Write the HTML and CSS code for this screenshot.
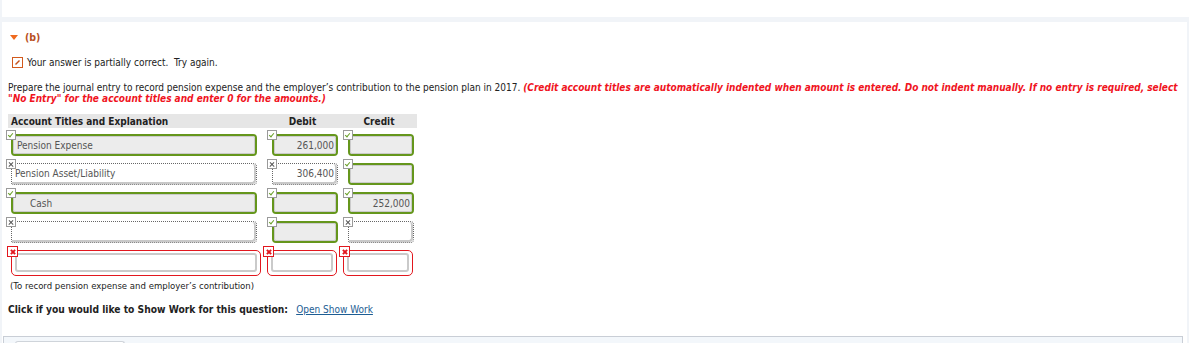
FILE: index.html
```html
<!DOCTYPE html>
<html lang="en">
<head>
    <meta charset="UTF-8">
    <title>Journal entry (b)</title>
    <link rel="stylesheet" href="styles.css">
</head>
<body>
    <div class="topbar"></div>
    <div class="panel">
        <!-- part heading -->
        <div class="part-head">
            <span class="caret"></span>
            <span class="part-label">(b)</span>
        </div>
        <!-- answer status -->
        <div class="status">
            <span class="status-icon">
                <svg width="7" height="7" viewBox="0 0 7 7"><path d="M1.5 5.5 L5.5 1.5" stroke="#c5501a" stroke-width="1.4"/></svg>
            </span>
            <span>Your answer is partially correct.&nbsp; Try again.</span>
        </div>
        <p class="prompt">Prepare the journal entry to record pension expense and the employer’s contribution to the pension plan in 2017. <em class="hint">(Credit account titles are automatically indented when amount is entered. Do not indent manually. If no entry is required, select "No Entry" for the account titles and enter 0 for the amounts.)</em></p>

        <!-- journal table -->
        <div class="journal">
            <div class="jhead">
                <div class="jh-acct">Account Titles and Explanation</div>
                <div class="jh-num">Debit</div>
                <div class="jh-num">Credit</div>
            </div>

            <div class="jrow">
                <div class="cell acct"><div class="fld ok"><i class="mark ok"></i><div class="box">Pension Expense</div></div></div>
                <div class="cell dr"><div class="fld ok"><i class="mark ok"></i><div class="box num">261,000</div></div></div>
                <div class="cell cr"><div class="fld ok"><i class="mark ok"></i><div class="box num"></div></div></div>
            </div>
            <div class="jrow">
                <div class="cell acct"><div class="fld bad"><i class="mark bad"></i><div class="box">Pension Asset/Liability</div></div></div>
                <div class="cell dr"><div class="fld bad"><i class="mark bad"></i><div class="box num">306,400</div></div></div>
                <div class="cell cr"><div class="fld ok"><i class="mark ok"></i><div class="box num"></div></div></div>
            </div>
            <div class="jrow">
                <div class="cell acct"><div class="fld ok"><i class="mark ok"></i><div class="box indent">Cash</div></div></div>
                <div class="cell dr"><div class="fld ok"><i class="mark ok"></i><div class="box num"></div></div></div>
                <div class="cell cr"><div class="fld ok"><i class="mark ok"></i><div class="box num">252,000</div></div></div>
            </div>
            <div class="jrow">
                <div class="cell acct"><div class="fld bad"><i class="mark bad"></i><div class="box"></div></div></div>
                <div class="cell dr"><div class="fld ok"><i class="mark ok"></i><div class="box num"></div></div></div>
                <div class="cell cr"><div class="fld bad"><i class="mark bad"></i><div class="box num"></div></div></div>
            </div>
            <div class="jrow missing">
                <div class="cell acct"><div class="fld req"><i class="mark req"></i><div class="box"></div></div></div>
                <div class="cell dr"><div class="fld req"><i class="mark req"></i><div class="box num"></div></div></div>
                <div class="cell cr"><div class="fld req"><i class="mark req"></i><div class="box num"></div></div></div>
            </div>
        </div>

        <p class="note">(To record pension expense and employer’s contribution)</p>
        <p class="showwork">Click if you would like to Show Work for this question: <a href="#" class="sw-link">Open Show Work</a></p>

        <div class="workarea">
            <div class="worktab"></div>
        </div>
    </div>
</body>
</html>
```
FILE: styles.css
```css
body {
    margin: 0;
    background: #f1f4f8;
    font-family: "DejaVu Sans Condensed", "DejaVu Sans", sans-serif;
    font-size: 10px;
    color: #222;
}

.topbar {
    height: 17px;
    margin-left: 2px;
    background: #fff;
}

.panel {
    margin: 5px 2px 0 2px;
    background: #fff;
    padding: 9px 0 0 6px;
}

/* heading */
.part-head {
    display: flex;
    align-items: center;
    gap: 7px;
    height: 12px;
    padding-left: 2px;
}

.caret {
    width: 0;
    height: 0;
    border-left: 4px solid transparent;
    border-right: 4px solid transparent;
    border-top: 5px solid #ef6a1f;
}

.part-label {
    color: #b84f1e;
    font-weight: bold;
    font-size: 10.5px;
}

/* status line */
.status {
    display: flex;
    align-items: center;
    gap: 4px;
    margin-top: 13px;
    padding-left: 4px;
    height: 12px;
}

.status-icon {
    width: 9px;
    height: 9px;
    border: 1px solid #d25a1d;
    display: flex;
    align-items: center;
    justify-content: center;
}

.prompt {
    margin: 14px 0 0 0;
    line-height: 11px;
    padding-right: 6px;
}

.hint {
    color: #f0141e;
    font-weight: bold;
}

/* journal */
.journal {
    width: 409px;
    margin-top: 10px;
}

.jhead {
    display: grid;
    grid-template-columns: 256px 77px 76px;
    height: 14px;
    align-items: center;
    background: #e6e6e6;
    font-weight: bold;
}

.jh-acct {
    padding-left: 3px;
}

.jh-num {
    text-align: center;
}

.jrow {
    display: grid;
    grid-template-columns: 256px 77px 76px;
    height: 29px;
}

.cell {
    padding-top: 6px;
}

.cell.acct {
    padding-left: 3px;
}

.cell.dr {
    padding-left: 8px;
}

.cell.cr {
    padding-left: 7px;
}

.fld {
    position: relative;
    height: 22px;
    box-sizing: border-box;
}

.acct .fld {
    width: 246px;
}

.dr .fld,
.cr .fld {
    width: 66px;
}

.box {
    height: 100%;
    box-sizing: border-box;
    padding: 0 3px;
    display: flex;
    align-items: center;
    color: #555;
    white-space: nowrap;
}

.box.num {
    justify-content: flex-end;
    padding-right: 1px;
}

.box.indent {
    padding-left: 16px;
}

.fld.ok {
    border: 2px solid #65961c;
    border-radius: 4px;
}

.fld.ok .box {
    border: 1px solid #cbcbcb;
    border-radius: 2px;
    background: #ececec;
}

.fld.bad {
    border: 1px dotted #666;
    border-radius: 2px 4px 4px 2px;
}

.fld.bad .box {
    border-right: 2px solid #c8c8c8;
    border-bottom: 2px solid #c8c8c8;
    border-radius: 0 4px 4px 0;
    background: #fff;
}

/* last row: missing entry */
.jrow.missing .cell.dr {
    padding-left: 3px;
}

.jrow.missing .cell.cr {
    padding-left: 2px;
}

.jrow.missing .acct .fld {
    width: 250px;
}

.jrow.missing .dr .fld,
.jrow.missing .cr .fld {
    width: 70px;
}

.fld.req {
    height: 26px;
    border: 1.5px solid #e2171e;
    border-radius: 5px;
    padding: 2px 3px 3px 3px;
}

.fld.req .box {
    border: 2px solid #cacaca;
    border-radius: 3px;
    background: #fff;
}

/* corner marks */
.mark {
    position: absolute;
    top: -6px;
    left: -7px;
    width: 8px;
    height: 8px;
    border: 1px solid #9a9a9a;
    background: #fff;
    z-index: 1;
}

.mark.ok::after {
    content: "";
    position: absolute;
    left: 2px;
    top: 1px;
    width: 2px;
    height: 4px;
    border-right: 1.5px solid #6aa02a;
    border-bottom: 1.5px solid #6aa02a;
    transform: rotate(40deg);
}

.mark.bad::before,
.mark.bad::after,
.mark.req::before,
.mark.req::after {
    content: "";
    position: absolute;
    left: 1px;
    top: 3.5px;
    width: 6px;
    height: 1.3px;
    background: #555;
    transform: rotate(45deg);
}

.mark.bad::after,
.mark.req::after {
    transform: rotate(-45deg);
}

.mark.req {
    top: -5px;
    left: -5px;
    width: 9px;
    height: 9px;
    border-color: #e2171e;
}

.mark.req::before,
.mark.req::after {
    background: #e2171e;
    height: 2px;
    top: 3.5px;
    left: 1.5px;
}

.fld.bad .mark {
    top: -5px;
    left: -6px;
}

.note {
    margin: 7px 0 0 2px;
    font-size: 9.5px;
}

.showwork {
    margin: 13px 0 0 0;
    font-weight: bold;
    font-size: 10.2px;
}

.sw-link {
    font-weight: normal;
    font-size: 10px;
    color: #1d5d93;
    margin-left: 5px;
}

.workarea {
    margin: 21px 4px 0 -5px;
    border: 1px solid #c9ced6;
    border-bottom: none;
    background: #f3f7fb;
    padding: 4px 0 0 11px;
}

.worktab {
    width: 108px;
    height: 6px;
    border: 1px solid #cfd4da;
    border-bottom: none;
    border-radius: 3px 3px 0 0;
    background: #fff;
}
```
